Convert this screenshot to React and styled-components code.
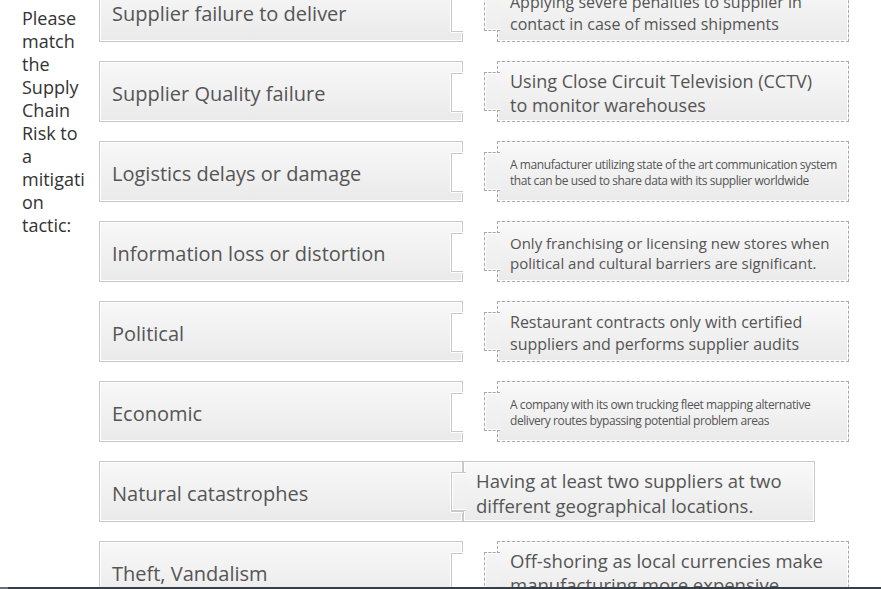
import React from "react";
import styled, { createGlobalStyle } from "styled-components";

const Global = createGlobalStyle`
  html, body { margin: 0; padding: 0; background: #fff; overflow: hidden; }
  body { font-family: "Open Sans", "DejaVu Sans", sans-serif; }
`;

const Page = styled.div`
  display: flex;
  align-items: flex-start;
  padding-left: 22px;
  height: 589px;
  overflow: hidden;
`;

const Prompt = styled.div`
  width: 64px;
  margin-top: 7px;
  font-size: 18px;
  line-height: 23px;
  color: #333;
  overflow-wrap: break-word;
  word-wrap: break-word;
`;

const Board = styled.div`
  margin-left: 13px;
  margin-top: -19px;
  display: flex;
  flex-direction: column;
  gap: 19px;
`;

const Row = styled.div`
  display: flex;
  align-items: flex-start;
`;

const Risk = styled.div`
  position: relative;
  box-sizing: border-box;
  width: 364px;
  height: 61px;
  padding: 3px 12px 0;
  display: flex;
  align-items: center;
  border: 1px solid #c9c9c9;
  background: linear-gradient(#f8f8f8, #eaeaea);
  box-shadow: inset 0 0 0 1px #fff;
  font-size: 20px;
  color: #555;
  white-space: nowrap;

  &::after {
    content: "";
    position: absolute;
    box-sizing: border-box;
    right: -1px;
    top: 11px;
    width: 12px;
    height: 39px;
    background: #fff;
    border: 1px solid #c9c9c9;
    border-right: none;
    box-shadow: -1px 0 0 #fff, 0 -1px 0 #fff, 0 1px 0 #fff;
  }
`;

const Tactic = styled.div`
  position: relative;
  box-sizing: border-box;
  width: 352px;
  height: 61px;
  margin-left: ${(p) => (p.$snapped ? "0" : "34px")};
  padding: 2px 12px 0;
  display: flex;
  flex-direction: column;
  justify-content: center;
  border: 1px ${(p) => (p.$snapped ? "solid #c9c9c9" : "dashed #a9a9a9")};
  background: linear-gradient(#f9f9f9, #eaeaea);
  box-shadow: inset 0 0 0 1px #fff;
  color: #555;

  &::before {
    content: "";
    position: absolute;
    box-sizing: border-box;
    left: ${(p) => (p.$snapped ? "-13px" : "-14px")};
    top: 10px;
    width: ${(p) => (p.$snapped ? "15px" : "16px")};
    height: 39px;
    background: linear-gradient(#f5f5f5, #eeeeee);
    border: 1px ${(p) => (p.$snapped ? "solid #c9c9c9" : "dashed #a9a9a9")};
    border-right: none;
    box-shadow: inset 1px 0 0 #fff, inset 0 1px 0 #fff, inset 0 -1px 0 #fff;
  }
`;

const Line = styled.div`
  white-space: nowrap;
  font-size: ${(p) => p.$size}px;
  line-height: ${(p) => p.$lh}px;
  letter-spacing: ${(p) => p.$ls || 0}px;
`;

const Footer = styled.div`
  position: fixed;
  left: 0;
  right: 0;
  bottom: 0;
  height: 2px;
  background: #353f45;
  border-left: 8px solid #6b6f72;
`;

const rows = [
  {
    risk: "Supplier failure to deliver",
    lines: ["Applying severe penalties to supplier in", "contact in case of missed shipments"],
    size: 16,
    lh: 22,
  },
  {
    risk: "Supplier Quality failure",
    lines: ["Using Close Circuit Television (CCTV)", "to monitor warehouses"],
    size: 18,
    lh: 24,
  },
  {
    risk: "Logistics delays or damage",
    lines: [
      "A manufacturer utilizing state of the art communication system",
      "that can be used to share data with its supplier worldwide",
    ],
    size: 12,
    lh: 16,
    ls: -0.42,
  },
  {
    risk: "Information loss or distortion",
    lines: ["Only franchising or licensing new stores when", "political and cultural barriers are significant."],
    size: 15,
    lh: 20,
  },
  {
    risk: "Political",
    lines: ["Restaurant contracts only with certified", "suppliers and performs supplier audits"],
    size: 16,
    lh: 22,
  },
  {
    risk: "Economic",
    lines: [
      "A company with its own trucking fleet mapping alternative",
      "delivery routes bypassing potential problem areas",
    ],
    size: 12,
    lh: 16,
    ls: -0.42,
  },
  {
    risk: "Natural catastrophes",
    lines: ["Having at least two suppliers at two", "different geographical locations."],
    size: 18.5,
    lh: 25,
    snapped: true,
  },
  {
    risk: "Theft, Vandalism",
    lines: ["Off-shoring as local currencies make", "manufacturing more expensive"],
    size: 18.5,
    lh: 24,
  },
];

export default function App() {
  return (
    <>
      <Global />
      <Page>
        <Prompt>Please match the Supply Chain Risk to a mitigation tactic:</Prompt>
        <Board>
          {rows.map((r) => (
            <Row key={r.risk}>
              <Risk>{r.risk}</Risk>
              <Tactic $snapped={r.snapped}>
                {r.lines.map((l) => (
                  <Line key={l} $size={r.size} $lh={r.lh} $ls={r.ls}>
                    {l}
                  </Line>
                ))}
              </Tactic>
            </Row>
          ))}
        </Board>
      </Page>
      <Footer />
    </>
  );
}
